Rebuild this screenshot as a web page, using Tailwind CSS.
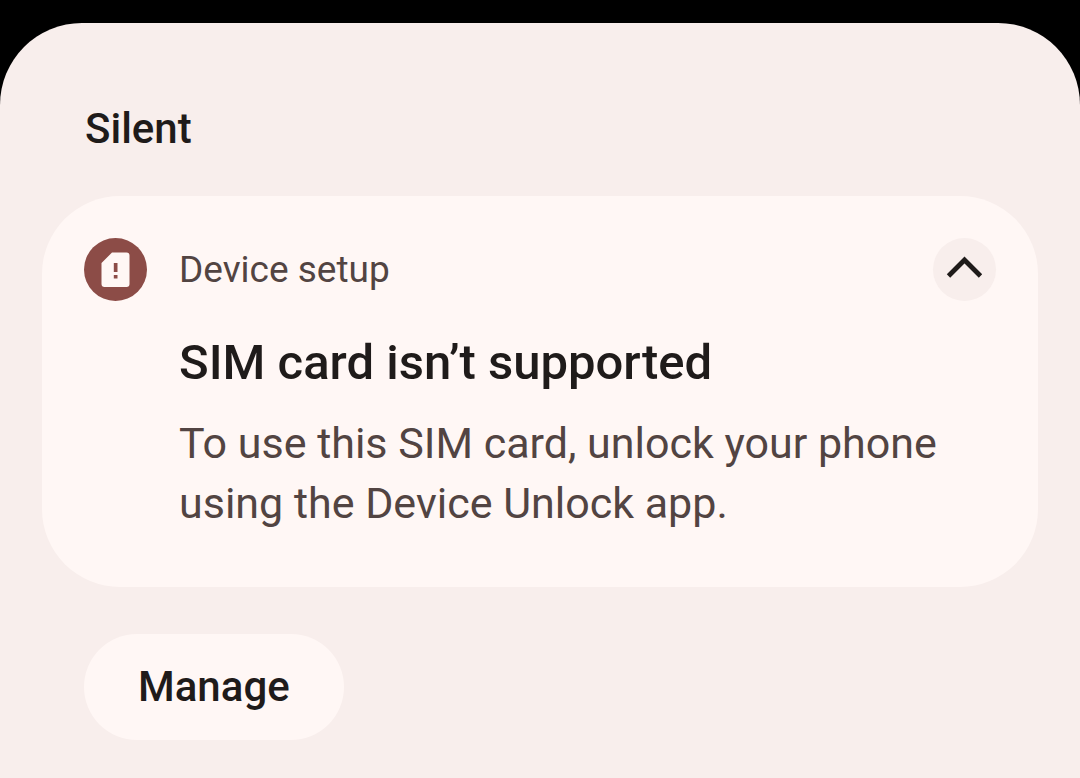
<!DOCTYPE html>
<html lang="en">
<head>
<meta charset="utf-8">
<meta name="viewport" content="width=device-width, initial-scale=1">
<title>Notifications</title>
<script src="https://cdn.jsdelivr.net/npm/@tailwindcss/browser@4"></script>
</head>
<body class="bg-black font-['Google_Sans',Roboto,sans-serif] text-[#1f1b1a]">
<div class="flex min-h-screen flex-col pt-[23px]">
  <main class="flex-1 rounded-t-[82px] bg-[#f8eeec] px-[42px] pt-[76px] pb-[38px]">
    <h1 class="px-[43px] text-[42px] leading-[60px] font-medium">Silent</h1>
    <article class="mt-[37px] rounded-[78px] bg-[#fff7f5] px-[42px] pt-[42px] pb-[54px]">
      <header class="flex items-center">
        <svg class="size-[63px] shrink-0" viewBox="0 0 63 63" role="img" aria-label="SIM card alert">
          <circle cx="31.5" cy="31.5" r="31.5" fill="#8c4c47"/>
          <path fill="#fff7f5" fill-rule="evenodd" d="M28 14.5H42.5a3 3 0 0 1 3 3V46a3 3 0 0 1-3 3H20.500a3 3 0 0 1-3-3V25ZM29.800 25v9h3.700v-9Zm0 12v3.500h3.700V37Z"/>
        </svg>
        <p class="ml-8 flex-1 text-[37px] leading-[48px] text-[#524442]">Device setup</p>
        <button type="button" aria-label="Collapse" class="flex size-[63px] items-center justify-center rounded-full bg-[#f8eeec]">
          <svg class="size-full" viewBox="0 0 63 63" fill="none" stroke="#1f1b1a" stroke-width="4.800" aria-hidden="true"><path d="M15.500 38 31.500 22 47.500 38"/></svg>
        </button>
      </header>
      <div class="pl-[95px]">
        <h2 class="mt-8 text-[49px] leading-[60px] font-medium">SIM card isn’t supported</h2>
        <p class="mt-5 text-[43px] leading-[60px] text-[#524442]">To use this SIM card, unlock your phone using the Device Unlock app.</p>
      </div>
    </article>
    <button type="button" class="mt-[47px] ml-[42px] h-[106px] rounded-full bg-[#fff7f5] px-[54px] text-[42px] leading-[60px] font-medium">Manage</button>
  </main>
</div>
</body>
</html>
